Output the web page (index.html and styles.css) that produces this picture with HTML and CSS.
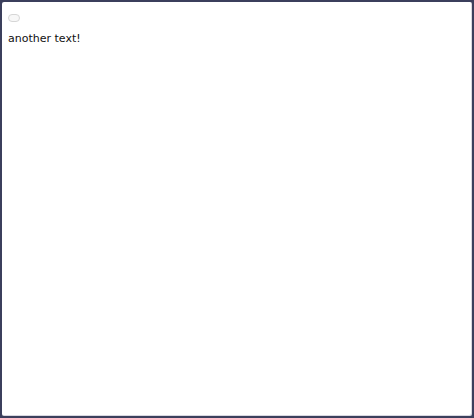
FILE: index.html
```html
<!DOCTYPE html>
<html>
<head>
<meta charset="utf-8">
<link rel="stylesheet" href="styles.css">
</head>
<body>
<div class="frame">
  <button class="toggle" type="button"></button>
  <p class="msg">another text!</p>
</div>
</body>
</html>
```
FILE: styles.css
```css
html, body {
  margin: 0;
  padding: 0;
  height: 100%;
}
body {
  background: #3b3f5c;
  font-family: "DejaVu Sans", sans-serif;
}
.frame {
  box-sizing: border-box;
  height: 418px;
  width: 474px;
  border: 2px solid #3b3f5c;
  border-radius: 4px;
  background: #ffffff;
  box-shadow: inset -1px -1px 0 #d8d8e0;
  padding: 12px 6px;
}
.toggle {
  display: block;
  width: 12px;
  height: 8px;
  padding: 0;
  border: 1px solid #d6d6d6;
  border-radius: 4px;
  background: #f7f7f7;
}
.msg {
  margin: 10px 0 0;
  font-size: 11px;
  line-height: 13px;
  color: #111;
}
```
